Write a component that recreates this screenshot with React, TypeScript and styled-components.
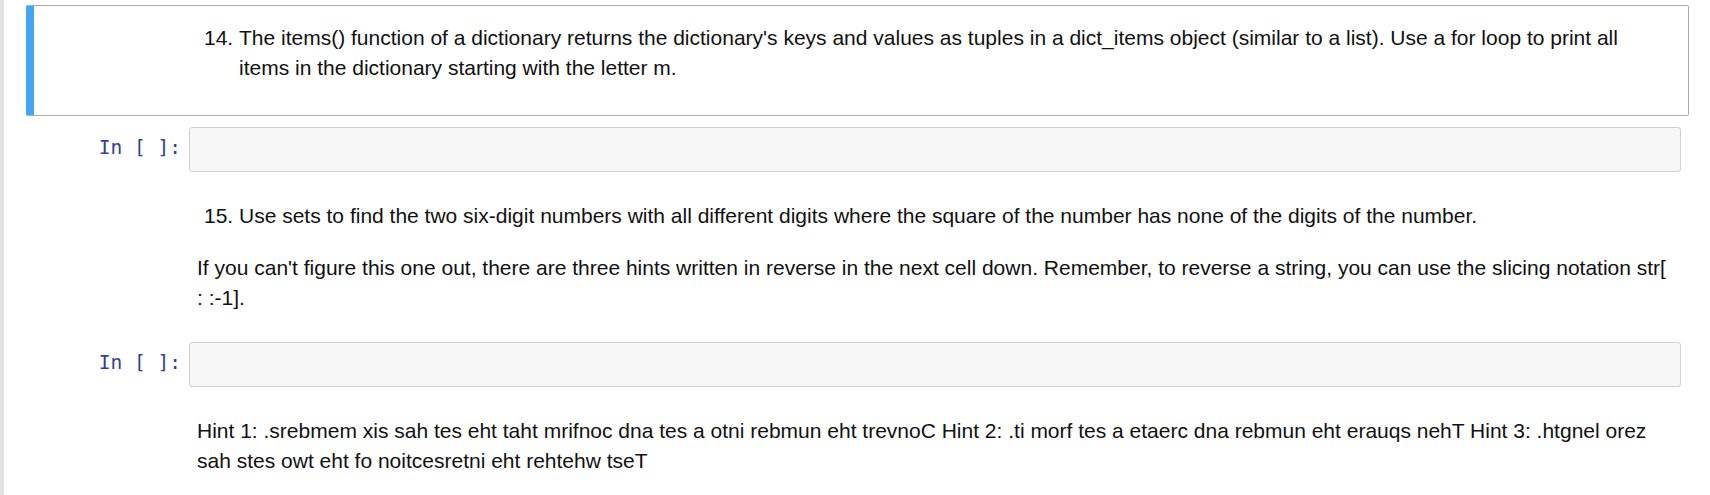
import React from "react";
import styled, { createGlobalStyle } from "styled-components";

const GlobalStyle = createGlobalStyle`
  html, body {
    margin: 0;
    padding: 0;
    background: #ffffff;
  }
  body {
    font-family: "Liberation Sans", Arial, sans-serif;
    color: #000000;
  }
`;

function App() {
  return (
    <Page>
      <GlobalStyle />
      <Notebook>
        <Cell selected>
          <Prompt />
          <Render $top={9.5}>
            <List start={14} $bottom={14.5}>
              <li>
                The items() function of a dictionary returns the dictionary's
                keys and values as tuples in a dict_items object (similar to a
                list). Use a for loop to print all items in the dictionary
                starting with the letter m.
              </li>
            </List>
          </Render>
        </Cell>

        <CodeCell>
          <Prompt>In [ ]:</Prompt>
          <InputBox />
        </CodeCell>

        <Cell>
          <Prompt />
          <Render>
            <List start={15}>
              <li>
                Use sets to find the two six-digit numbers with all different
                digits where the square of the number has none of the digits of
                the number.
              </li>
            </List>
            <Para>
              If you can't figure this one out, there are three hints written in
              reverse in the next cell down. Remember, to reverse a string, you
              can use the slicing notation str[ : :-1].
            </Para>
          </Render>
        </Cell>

        <CodeCell>
          <Prompt>In [ ]:</Prompt>
          <InputBox />
        </CodeCell>

        <Cell>
          <Prompt />
          <Render>
            <Para>
              Hint 1: .srebmem xis sah tes eht taht mrifnoc dna tes a otni
              rebmun eht trevnoC Hint 2: .ti morf tes a etaerc dna rebmun eht
              erauqs nehT Hint 3: .htgnel orez sah stes owt eht fo noitcesretni
              eht rehtehw tseT
            </Para>
          </Render>
        </Cell>
      </Notebook>
    </Page>
  );
}

export default App;

const Page = styled.div`
  min-height: 495px;
  border-left: 4px solid #e2e2e2;
  box-sizing: border-box;
`;

const Notebook = styled.div`
  padding: 5px 21px 0 22px;
  display: flex;
  flex-direction: column;
`;

const Cell = styled.div<{ selected?: boolean }>`
  display: grid;
  grid-template-columns: 147.5px 1fr;
  border: 1px solid ${(p) => (p.selected ? "#ababab" : "transparent")};
  border-left: 8px solid ${(p) => (p.selected ? "#42a5f5" : "transparent")};
  border-radius: 2px;
  padding: 7.5px;
`;

const CodeCell = styled.div`
  display: grid;
  grid-template-columns: 147.5px 1fr;
  border: 1px solid transparent;
  border-left: 8px solid transparent;
  padding: 9.5px 7.5px 7.5px;
`;

const Prompt = styled.div`
  font-family: "DejaVu Sans Mono", "Liberation Mono", monospace;
  font-size: 19.5px;
  line-height: 25px;
  color: #303f9f;
  text-align: right;
  padding: 8px 8px 0 0;
  white-space: pre;
`;

const InputBox = styled.div`
  height: 45px;
  box-sizing: border-box;
  background: #f7f7f7;
  border: 1px solid #cfcfcf;
  border-radius: 3px;
`;

const Render = styled.div<{ $top?: number }>`
  font-size: 21px;
  line-height: 30px;
  color: #111111;
  padding: ${(p) => p.$top ?? 12}px 10.5px 10px 8px;
`;

const List = styled.ol<{ $bottom?: number }>`
  margin: 0 0 ${(p) => p.$bottom ?? 0}px 0;
  padding-left: 42px;
`;

const Para = styled.p`
  margin: 0;
  ol + & {
    margin-top: 22px;
  }
`;
